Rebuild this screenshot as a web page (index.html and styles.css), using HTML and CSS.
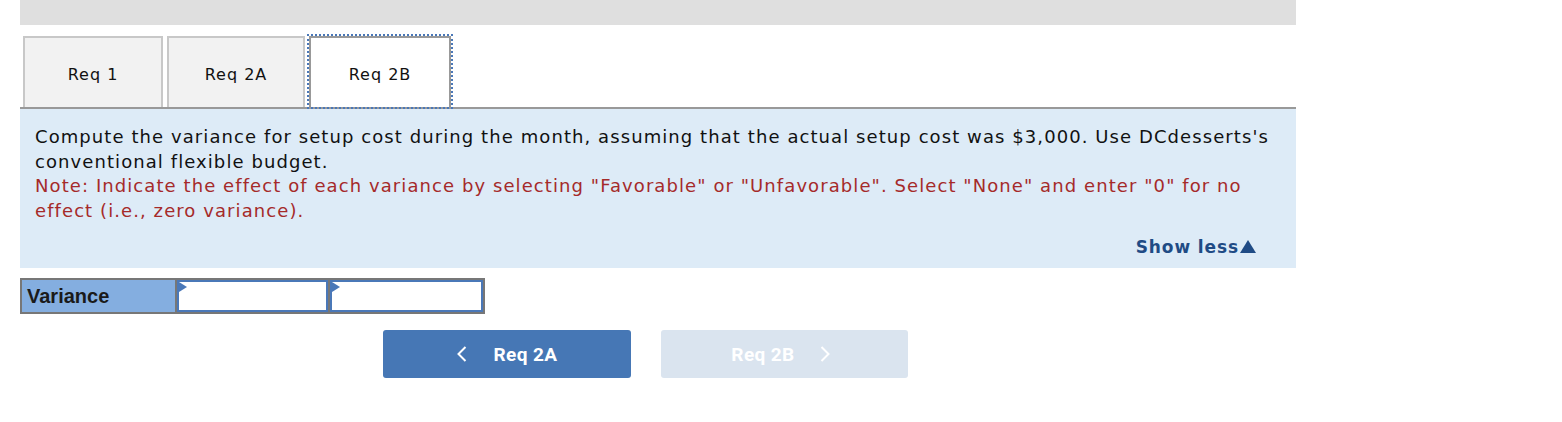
FILE: index.html
```html
<!DOCTYPE html>
<html>
<head>
<meta charset="utf-8">
<link rel="stylesheet" href="styles.css">
</head>
<body>
<div class="wrap">
  <div class="topbar"></div>
  <div class="tabs">
    <div class="tab">Req 1</div>
    <div class="tab tab-2a">Req 2A</div>
    <div class="tab tab-active">Req 2B</div>
  </div>
  <div class="panel">
    <p class="q">Compute the variance for setup cost during the month, assuming that the actual setup cost was $3,000. Use DCdesserts's conventional flexible budget.</p>
    <p class="note">Note: Indicate the effect of each variance by selecting "Favorable" or "Unfavorable". Select "None" and enter "0" for no effect (i.e., zero variance).</p>
    <div class="show-row"><span class="show">Show less</span><svg class="tri" width="16" height="13" viewBox="0 0 16 13"><path d="M8 0 L16 13 L0 13 Z" fill="#1f4b85"/></svg></div>
  </div>
  <div class="vtable">
    <div class="vlabel">Variance</div>
    <div class="vcell"><span class="flag"></span></div>
    <div class="vcell"><span class="flag"></span></div>
  </div>
  <div class="navs">
    <div class="btn btn-prev"><svg class="chev" width="10" height="16" viewBox="0 0 10 16"><path d="M8.5 1 L1.5 8 L8.5 15" fill="none" stroke="#fff" stroke-width="2"/></svg><span>Req 2A</span></div>
    <div class="btn btn-next"><span>Req 2B</span><svg class="chev right" width="10" height="16" viewBox="0 0 10 16"><path d="M1.5 1 L8.5 8 L1.5 15" fill="none" stroke="#fff" stroke-width="2"/></svg></div>
  </div>
</div>
</body>
</html>
```
FILE: styles.css
```css
html, body {
  margin: 0;
  padding: 0;
  background: #fff;
}
.wrap {
  width: 1276px;
  margin-left: 20px;
  font-family: "DejaVu Sans", Verdana, sans-serif;
}
.topbar {
  height: 25px;
  background: #dfdfdf;
}
.tabs {
  display: flex;
  margin-top: 11px;
  border-bottom: 2px solid #999;
  height: 71px;
  align-items: flex-end;
}
.tab {
  box-sizing: border-box;
  height: 71px;
  width: 140px;
  margin-left: 3px;
  border: 2px solid #c8c8c8;
  border-bottom: none;
  background: #f2f2f2;
  display: flex;
  align-items: center;
  justify-content: center;
  font-size: 16px;
  letter-spacing: 1px;
  color: #111;
  padding-top: 3px;
}
.tab-2a {
  margin-left: 4px;
  width: 138px;
}
.tab-active {
  margin-left: 4px;
  width: 142px;
  background: #fff;
  border-color: #999;
  outline: 2px dotted #4a78b8;
  outline-offset: 0;
}
.panel {
  background: #ddebf7;
  padding: 16px 20px 12px 15px;
  height: 131px;
}
.panel p {
  margin: 0;
  font-size: 18px;
  letter-spacing: 1.08px;
  line-height: 24.5px;
}
.q {
  color: #111;
}
.note {
  color: #a52a2a;
}
.show-row {
  display: flex;
  justify-content: flex-end;
  align-items: center;
  margin-top: 14px;
  padding-right: 20px;
}
.show {
  font-weight: bold;
  color: #1f4b85;
  font-size: 17px;
  letter-spacing: 0.9px;
}
.tri {
  margin-left: 1px;
  margin-top: -2px;
}
.vtable {
  margin-top: 10px;
  display: flex;
  width: 465px;
  height: 36px;
  box-sizing: border-box;
  border: 2px solid #777;
  background: #777;
}
.vlabel {
  width: 154px;
  background: #84aee0;
  font-family: "Liberation Sans", Arial, sans-serif;
  font-weight: bold;
  font-size: 20px;
  color: #1a1a1a;
  padding-left: 5px;
  box-sizing: border-box;
  display: flex;
  align-items: center;
}
.vcell {
  position: relative;
  width: 153px;
  margin-left: 2px;
  background: #fff;
  border: 2px solid #4a78b8;
  box-sizing: border-box;
}
.vcell + .vcell {
  width: 154px;
}
.flag {
  position: absolute;
  left: 0;
  top: 0;
  width: 0;
  height: 0;
  border-top: 5px solid transparent;
  border-bottom: 5px solid transparent;
  border-left: 8px solid #4a78b8;
}
.navs {
  display: flex;
  gap: 30px;
  margin-top: 16px;
  margin-left: 363px;
}
.btn {
  width: 248px;
  height: 48px;
  border-radius: 3px;
  display: flex;
  align-items: center;
  justify-content: center;
  font-family: Roboto, "Liberation Sans", sans-serif;
  font-weight: bold;
  font-size: 19px;
  letter-spacing: 0.4px;
  color: #fff;
}
.btn-prev {
  background: #4677b5;
}
.btn-next {
  width: 247px;
  background: #dae4ef;
}
.chev {
  margin-right: 27px;
}
.chev.right {
  margin-right: 8px;
  margin-left: 25px;
}
```
